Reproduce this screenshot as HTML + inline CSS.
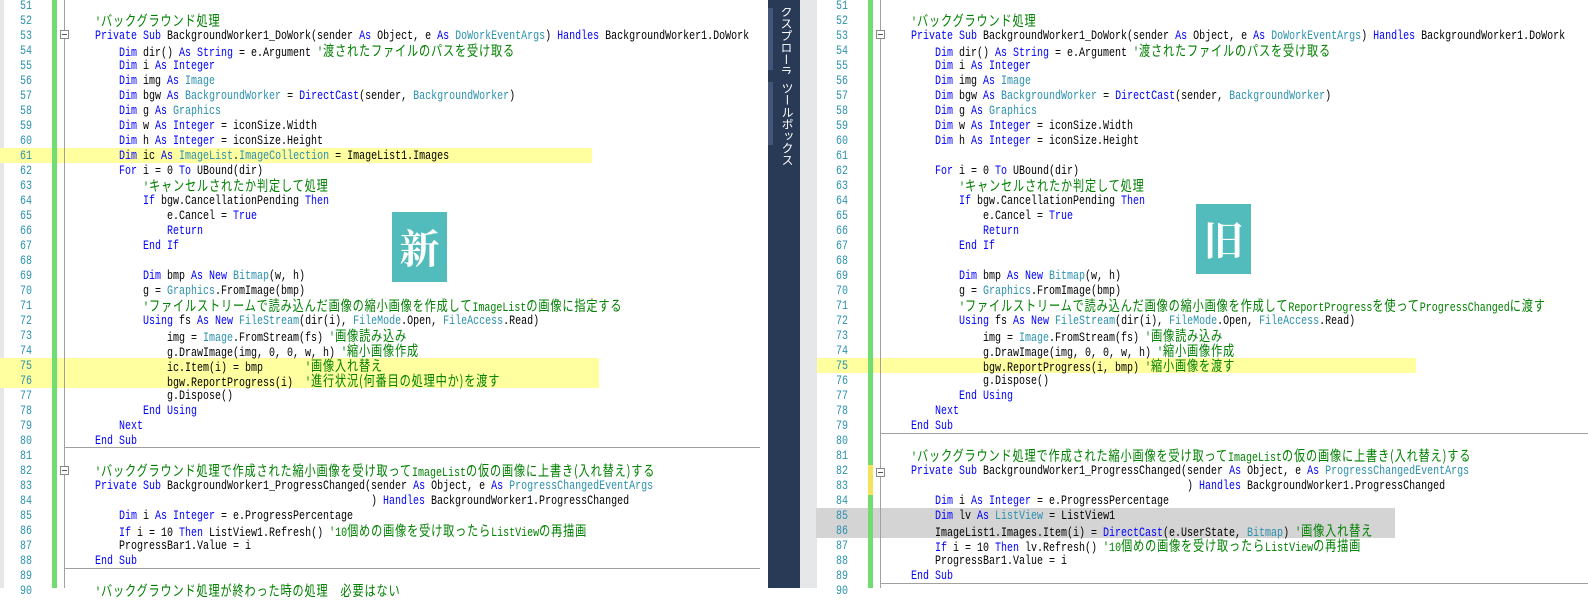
<!DOCTYPE html>
<html><head><meta charset="utf-8"><style>
*{margin:0;padding:0}
body{width:1588px;height:588px;overflow:hidden;background:#fff;position:relative;font-family:"Liberation Mono","Noto Sans CJK JP",monospace}
.abs{position:absolute}
.nums{position:absolute;top:-2px;width:60px;text-align:right;transform:scaleX(.7692);transform-origin:right top;color:#2b91af;font-size:13px}
.nums div,.code div{height:15px;line-height:15px;white-space:pre}
.code{position:absolute;top:-2px;transform:scaleX(.7692);transform-origin:left top;font-size:13px;color:#000}
b{font-weight:normal;font-size:14.5px;letter-spacing:1.1px;font-family:"Noto Sans CJK JP",sans-serif;line-height:15px}
.k{color:#0000ff}.t{color:#2b91af}.c{color:#008000}
.hl{background:#ffff9f;position:absolute;height:15px}
.gr{background:#d4d4d4;position:absolute;height:30px}
.sep{position:absolute;height:1px;background:#a0a0a0}
.vl{position:absolute;width:1px;background:#a0a0a0;top:0;height:588px}
.gb{position:absolute;width:5px;background:#6fdd6f;top:0;height:588px}
.fold{position:absolute;width:7px;height:7px;border:1px solid #888;background:#fff}
.fold:after{content:"";position:absolute;left:1px;top:3px;width:5px;height:1px;background:#555}
.badge{position:absolute;width:55px;height:70px;background:#52bbbb;color:#fff;font:bold 40px/70px "Noto Serif CJK SC","Noto Sans CJK JP",serif;text-align:center}
.vt{position:absolute;writing-mode:vertical-rl;color:#fff;font:12px "Noto Sans CJK JP",sans-serif;left:779px;white-space:nowrap}
</style></head><body>
<!-- left pane -->
<div class="abs" style="left:0;top:0;width:4px;height:588px;background:#e6e7e8"></div>
<div class="hl" style="left:0;top:148px;width:592px"></div>
<div class="hl" style="left:0;top:358px;width:599px;height:30px"></div>
<div class="gb" style="left:52px"></div>
<div class="vl" style="left:64px"></div>
<div class="sep" style="left:64px;top:447px;width:696px"></div>
<div class="sep" style="left:64px;top:568px;width:696px"></div>
<div class="fold" style="left:60px;top:30px"></div>
<div class="fold" style="left:60px;top:466px"></div>
<div class="nums" style="left:-28px"><div>51</div><div>52</div><div>53</div><div>54</div><div>55</div><div>56</div><div>57</div><div>58</div><div>59</div><div>60</div><div>61</div><div>62</div><div>63</div><div>64</div><div>65</div><div>66</div><div>67</div><div>68</div><div>69</div><div>70</div><div>71</div><div>72</div><div>73</div><div>74</div><div>75</div><div>76</div><div>77</div><div>78</div><div>79</div><div>80</div><div>81</div><div>82</div><div>83</div><div>84</div><div>85</div><div>86</div><div>87</div><div>88</div><div>89</div><div>90</div></div>
<div class="code" style="left:71px">
<div> </div>
<div class="c">    '<b>バックグラウンド処理</b></div>
<div>    <span class="k">Private Sub</span> BackgroundWorker1_DoWork(sender <span class="k">As</span> Object, e <span class="k">As</span> <span class="t">DoWorkEventArgs</span>) <span class="k">Handles</span> BackgroundWorker1.DoWork</div>
<div>        <span class="k">Dim</span> dir() <span class="k">As String</span> = e.Argument <span class="c">'<b>渡されたファイルのパスを受け取る</b></span></div>
<div>        <span class="k">Dim</span> i <span class="k">As Integer</span></div>
<div>        <span class="k">Dim</span> img <span class="k">As</span> <span class="t">Image</span></div>
<div>        <span class="k">Dim</span> bgw <span class="k">As</span> <span class="t">BackgroundWorker</span> = <span class="k">DirectCast</span>(sender, <span class="t">BackgroundWorker</span>)</div>
<div>        <span class="k">Dim</span> g <span class="k">As</span> <span class="t">Graphics</span></div>
<div>        <span class="k">Dim</span> w <span class="k">As Integer</span> = iconSize.Width</div>
<div>        <span class="k">Dim</span> h <span class="k">As Integer</span> = iconSize.Height</div>
<div>        <span class="k">Dim</span> ic <span class="k">As</span> <span class="t">ImageList</span>.<span class="t">ImageCollection</span> = ImageList1.Images</div>
<div>        <span class="k">For</span> i = 0 <span class="k">To</span> UBound(dir)</div>
<div class="c">            '<b>キャンセルされたか判定して処理</b></div>
<div>            <span class="k">If</span> bgw.CancellationPending <span class="k">Then</span></div>
<div>                e.Cancel = <span class="k">True</span></div>
<div>                <span class="k">Return</span></div>
<div>            <span class="k">End If</span></div>
<div> </div>
<div>            <span class="k">Dim</span> bmp <span class="k">As New</span> <span class="t">Bitmap</span>(w, h)</div>
<div>            g = <span class="t">Graphics</span>.FromImage(bmp)</div>
<div class="c">            '<b>ファイルストリームで読み込んだ画像の縮小画像を作成して</b>ImageList<b>の画像に指定する</b></div>
<div>            <span class="k">Using</span> fs <span class="k">As New</span> <span class="t">FileStream</span>(dir(i), <span class="t">FileMode</span>.Open, <span class="t">FileAccess</span>.Read)</div>
<div>                img = <span class="t">Image</span>.FromStream(fs) <span class="c">'<b>画像読み込み</b></span></div>
<div>                g.DrawImage(img, 0, 0, w, h) <span class="c">'<b>縮小画像作成</b></span></div>
<div>                ic.Item(i) = bmp       <span class="c">'<b>画像入れ替え</b></span></div>
<div>                bgw.ReportProgress(i)  <span class="c">'<b>進行状況(何番目の処理中か)を渡す</b></span></div>
<div>                g.Dispose()</div>
<div>            <span class="k">End Using</span></div>
<div>        <span class="k">Next</span></div>
<div>    <span class="k">End Sub</span></div>
<div> </div>
<div class="c">    '<b>バックグラウンド処理で作成された縮小画像を受け取って</b>ImageList<b>の仮の画像に上書き(入れ替え)する</b></div>
<div>    <span class="k">Private Sub</span> BackgroundWorker1_ProgressChanged(sender <span class="k">As</span> Object, e <span class="k">As</span> <span class="t">ProgressChangedEventArgs</span></div>
<div>                                                  ) <span class="k">Handles</span> BackgroundWorker1.ProgressChanged</div>
<div>        <span class="k">Dim</span> i <span class="k">As Integer</span> = e.ProgressPercentage</div>
<div>        <span class="k">If</span> i = 10 <span class="k">Then</span> ListView1.Refresh() <span class="c">'10<b>個めの画像を受け取ったら</b>ListView<b>の再描画</b></span></div>
<div>        ProgressBar1.Value = i</div>
<div>    <span class="k">End Sub</span></div>
<div> </div>
<div class="c">    '<b>バックグラウンド処理が終わった時の処理　必要はない</b></div>
</div>
<div class="badge" style="left:392px;top:212px">新</div>

<!-- middle strip -->
<div class="abs" style="left:768px;top:0;width:32px;height:588px;background:#293a56;overflow:hidden">
<div class="abs" style="left:0;top:8px;width:5px;height:62px;background:#44557a"></div>
<div class="abs" style="left:0;top:82px;width:5px;height:63px;background:#44557a"></div>
</div>
<div class="abs" style="left:768px;top:8px;width:32px;height:66px;overflow:hidden"><div class="vt" style="left:10px;top:-6px">:クスプローラー</div></div>
<div class="vt" style="top:82px">ツールボックス</div>
<div class="abs" style="left:800px;top:0;width:17px;height:588px;background:#e6e7e8"></div>

<!-- right pane -->
<div class="hl" style="left:817px;top:358px;width:599px"></div>
<div class="gr" style="left:816px;top:508px;width:579px"></div>
<div class="gb" style="left:868px"></div>
<div class="abs" style="left:868px;top:465px;width:5px;height:30px;background:#f5e35a"></div>
<div class="vl" style="left:880px"></div>
<div class="sep" style="left:880px;top:433px;width:708px"></div>
<div class="sep" style="left:880px;top:583px;width:708px"></div>
<div class="fold" style="left:876px;top:30px"></div>
<div class="fold" style="left:876px;top:468px"></div>
<div class="nums" style="left:788px"><div>51</div><div>52</div><div>53</div><div>54</div><div>55</div><div>56</div><div>57</div><div>58</div><div>59</div><div>60</div><div>61</div><div>62</div><div>63</div><div>64</div><div>65</div><div>66</div><div>67</div><div>68</div><div>69</div><div>70</div><div>71</div><div>72</div><div>73</div><div>74</div><div>75</div><div>76</div><div>77</div><div>78</div><div>79</div><div>80</div><div>81</div><div>82</div><div>83</div><div>84</div><div>85</div><div>86</div><div>87</div><div>88</div><div>89</div><div>90</div></div>
<div class="code" style="left:887px">
<div> </div>
<div class="c">    '<b>バックグラウンド処理</b></div>
<div>    <span class="k">Private Sub</span> BackgroundWorker1_DoWork(sender <span class="k">As</span> Object, e <span class="k">As</span> <span class="t">DoWorkEventArgs</span>) <span class="k">Handles</span> BackgroundWorker1.DoWork</div>
<div>        <span class="k">Dim</span> dir() <span class="k">As String</span> = e.Argument <span class="c">'<b>渡されたファイルのパスを受け取る</b></span></div>
<div>        <span class="k">Dim</span> i <span class="k">As Integer</span></div>
<div>        <span class="k">Dim</span> img <span class="k">As</span> <span class="t">Image</span></div>
<div>        <span class="k">Dim</span> bgw <span class="k">As</span> <span class="t">BackgroundWorker</span> = <span class="k">DirectCast</span>(sender, <span class="t">BackgroundWorker</span>)</div>
<div>        <span class="k">Dim</span> g <span class="k">As</span> <span class="t">Graphics</span></div>
<div>        <span class="k">Dim</span> w <span class="k">As Integer</span> = iconSize.Width</div>
<div>        <span class="k">Dim</span> h <span class="k">As Integer</span> = iconSize.Height</div>
<div> </div>
<div>        <span class="k">For</span> i = 0 <span class="k">To</span> UBound(dir)</div>
<div class="c">            '<b>キャンセルされたか判定して処理</b></div>
<div>            <span class="k">If</span> bgw.CancellationPending <span class="k">Then</span></div>
<div>                e.Cancel = <span class="k">True</span></div>
<div>                <span class="k">Return</span></div>
<div>            <span class="k">End If</span></div>
<div> </div>
<div>            <span class="k">Dim</span> bmp <span class="k">As New</span> <span class="t">Bitmap</span>(w, h)</div>
<div>            g = <span class="t">Graphics</span>.FromImage(bmp)</div>
<div class="c">            '<b>ファイルストリームで読み込んだ画像の縮小画像を作成して</b>ReportProgress<b>を使って</b>ProgressChanged<b>に渡す</b></div>
<div>            <span class="k">Using</span> fs <span class="k">As New</span> <span class="t">FileStream</span>(dir(i), <span class="t">FileMode</span>.Open, <span class="t">FileAccess</span>.Read)</div>
<div>                img = <span class="t">Image</span>.FromStream(fs) <span class="c">'<b>画像読み込み</b></span></div>
<div>                g.DrawImage(img, 0, 0, w, h) <span class="c">'<b>縮小画像作成</b></span></div>
<div>                bgw.ReportProgress(i, bmp) <span class="c">'<b>縮小画像を渡す</b></span></div>
<div>                g.Dispose()</div>
<div>            <span class="k">End Using</span></div>
<div>        <span class="k">Next</span></div>
<div>    <span class="k">End Sub</span></div>
<div> </div>
<div class="c">    '<b>バックグラウンド処理で作成された縮小画像を受け取って</b>ImageList<b>の仮の画像に上書き(入れ替え)する</b></div>
<div>    <span class="k">Private Sub</span> BackgroundWorker1_ProgressChanged(sender <span class="k">As</span> Object, e <span class="k">As</span> <span class="t">ProgressChangedEventArgs</span></div>
<div>                                                  ) <span class="k">Handles</span> BackgroundWorker1.ProgressChanged</div>
<div>        <span class="k">Dim</span> i <span class="k">As Integer</span> = e.ProgressPercentage</div>
<div>        <span class="k">Dim</span> lv <span class="k">As</span> <span class="t">ListView</span> = ListView1</div>
<div>        ImageList1.Images.Item(i) = <span class="k">DirectCast</span>(e.UserState, <span class="t">Bitmap</span>) <span class="c">'<b>画像入れ替え</b></span></div>
<div>        <span class="k">If</span> i = 10 <span class="k">Then</span> lv.Refresh() <span class="c">'10<b>個めの画像を受け取ったら</b>ListView<b>の再描画</b></span></div>
<div>        ProgressBar1.Value = i</div>
<div>    <span class="k">End Sub</span></div>
<div> </div>
</div>
<div class="badge" style="left:1196px;top:204px">旧</div>
</body></html>
